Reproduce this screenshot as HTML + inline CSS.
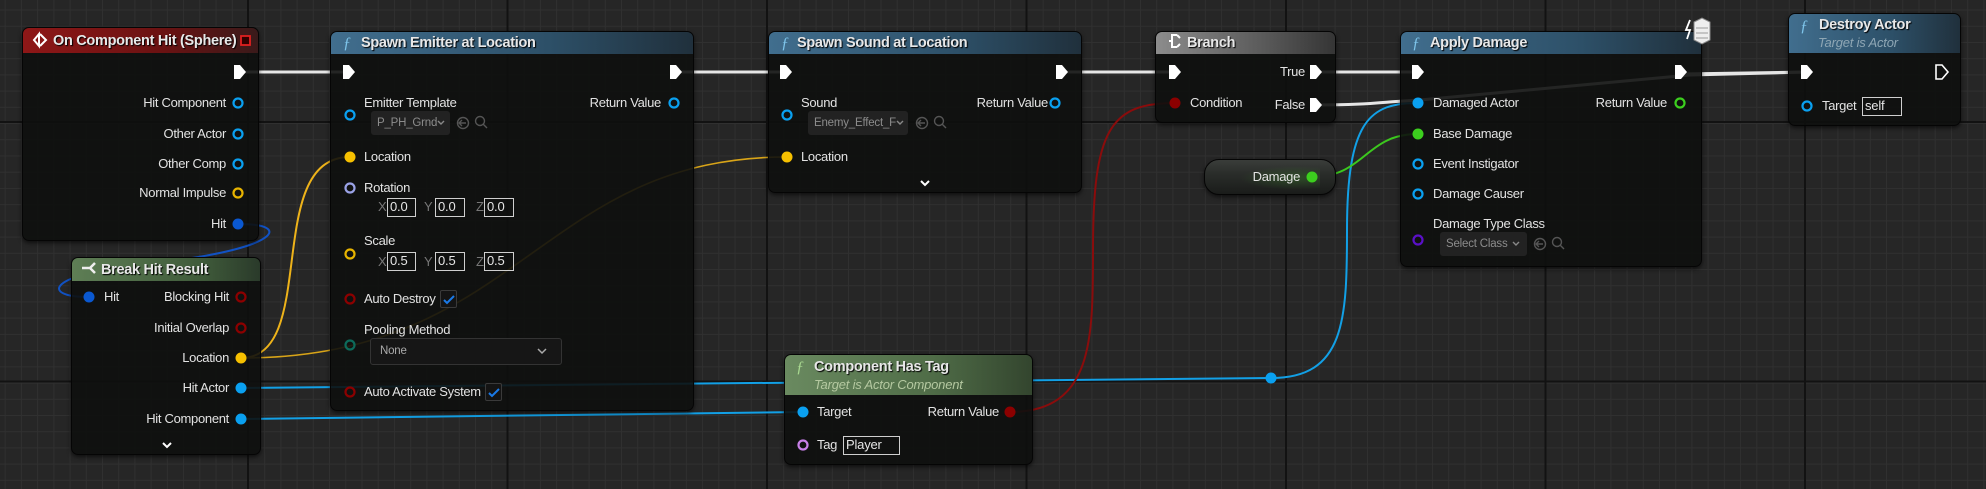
<!DOCTYPE html>
<html><head><meta charset="utf-8"><style>
*{margin:0;padding:0;box-sizing:border-box}
body{width:1986px;height:489px;overflow:hidden;background:#262626;font-family:"Liberation Sans",sans-serif;position:relative}
#grid{position:absolute;left:0;top:0;width:1986px;height:489px;
background-image:
linear-gradient(90deg,#121212 0,#121212 2px,transparent 2px),
linear-gradient(0deg,#121212 0,#121212 2px,transparent 2px),
linear-gradient(90deg,#303030 0,#303030 1px,transparent 1px),
linear-gradient(0deg,#303030 0,#303030 1px,transparent 1px);
background-size:259.5px 259.5px,259.5px 259.5px,16.22px 16.22px,16.22px 16.22px;
background-position:247px 0,0 123px,4.7px 0,0 10.5px;}
svg{position:absolute;left:0;top:0}
.n{position:absolute;background:rgba(14,15,14,0.9);border:1px solid #050505;border-radius:7px;box-shadow:0 2px 4px rgba(0,0,0,.6)}
.h{position:absolute;left:0;top:0;right:0;border-radius:6px 6px 0 0}
.ti{position:absolute;color:#e8e8e8;font-weight:bold;font-size:14.5px;letter-spacing:-0.3px;white-space:nowrap;text-shadow:1px 1px 1px #000;line-height:18px}
.st{position:absolute;font-style:italic;font-size:13px;white-space:nowrap;line-height:16px;letter-spacing:-0.2px}
.t{position:absolute;color:#e2e2e2;font-size:13px;letter-spacing:-0.3px;white-space:nowrap;line-height:18px}
.r{text-align:right}
.vb{position:absolute;border:1px solid #cfcfcf;color:#e6e6e6;font-size:13px;line-height:16px;padding-left:2px;letter-spacing:-0.2px}
.dd{position:absolute;background:#222;border-radius:3px;color:#8c8c8c;font-size:11.5px;line-height:24px;padding-left:6px;letter-spacing:-0.2px;white-space:nowrap;overflow:hidden}
.xyz{position:absolute;color:#777;font-size:13px;line-height:18px}
.cb{position:absolute;width:17px;height:18px;background:#141414;border:1px solid #3a3a3a;border-radius:2px}
</style></head><body>
<div id="grid"></div>

<!-- wires -->
<svg width="1986" height="489" fill="none">
<g stroke="#e6e6e6" stroke-width="3">
<path d="M240,72 L349,72"/><path d="M676,72 L786,72"/><path d="M1062,72 L1175,72"/><path d="M1316,72 L1418,72"/><path d="M1681,74 L1807,72"/>
<path d="M1316,105 C1370,105 1380,102 1420,100 L1690,75 L1807,72"/>
</g>
<path d="M238,224 C300,224 270,252 150,263 C45,274 40,297 89,297" stroke="#1152c4" stroke-width="2"/>
<path d="M241,358 C320,358 262,157 350,157" stroke="#eeb31a" stroke-width="2"/>
<path d="M241,358 C520,358 540,157 787,157" stroke="#d8a418" stroke-width="1.6"/>
<path d="M241,388 L1271,378" stroke="#12a0e6" stroke-width="2"/>
<path d="M1271,378 C1345,378 1347,320 1347,230 C1347,120 1370,103 1418,103" stroke="#12a0e6" stroke-width="2"/>
<path d="M241,419 L803,412" stroke="#12a0e6" stroke-width="2"/>
<path d="M1010,412 C1093,412 1093,340 1093,250 C1093,130 1110,103 1175,103" stroke="#8a0c0c" stroke-width="2"/>
<path d="M1312,177 C1365,177 1365,134 1418,134" stroke="#3cc81e" stroke-width="2"/>
</svg>

<!-- Node 1 -->
<div class="n" style="left:22px;top:27px;width:237px;height:214px">
<div class="h" style="height:25px;background:linear-gradient(90deg,#8e1717,#6a1212 60%,#3a1a1a)"></div>
<div class="ti" style="left:30px;top:4px">On Component Hit (Sphere)</div>
</div>
<!-- Break -->
<div class="n" style="left:71px;top:257px;width:190px;height:198px">
<div class="h" style="height:23px;background:linear-gradient(90deg,#5e7e55,#3f5a3a 70%,#2a3a2a)"></div>
<div class="ti" style="left:29px;top:3px">Break Hit Result</div>
</div>
<!-- Spawn Emitter -->
<div class="n" style="left:330px;top:31px;width:364px;height:380px">
<div class="h" style="height:22px;background:linear-gradient(90deg,#416e8e,#2d5068 60%,#20303c)"></div>
<div class="ti" style="left:30px;top:2px">Spawn Emitter at Location</div>
</div>
<!-- Spawn Sound -->
<div class="n" style="left:768px;top:31px;width:314px;height:162px">
<div class="h" style="height:22px;background:linear-gradient(90deg,#416e8e,#2d5068 60%,#20303c)"></div>
<div class="ti" style="left:28px;top:2px">Spawn Sound at Location</div>
</div>
<!-- Branch -->
<div class="n" style="left:1155px;top:31px;width:181px;height:92px">
<div class="h" style="height:22px;background:linear-gradient(90deg,#8c8c8c,#5a5a5a 60%,#353535)"></div>
<div class="ti" style="left:31px;top:2px">Branch</div>
</div>
<!-- Damage pill -->
<div class="n" style="left:1204px;top:159px;width:132px;height:36px;border-radius:15px;background:linear-gradient(180deg,#3a3d3a 0,#2a2d2a 40%,#1a1c1a 100%),#222"></div>
<div style="position:absolute;left:1240px;top:166px;width:80px;height:24px;background:radial-gradient(ellipse at 70% 50%,rgba(60,140,40,.35),transparent 70%)"></div>
<!-- Apply Damage -->
<div class="n" style="left:1400px;top:31px;width:302px;height:236px">
<div class="h" style="height:22px;background:linear-gradient(90deg,#416e8e,#2d5068 60%,#20303c)"></div>
<div class="ti" style="left:29px;top:2px">Apply Damage</div>
</div>
<!-- Destroy Actor -->
<div class="n" style="left:1788px;top:13px;width:173px;height:113px">
<div class="h" style="height:39px;background:linear-gradient(90deg,#416e8e,#2d5068 60%,#20303c)"></div>
<div class="ti" style="left:30px;top:2px">Destroy Actor</div>
<div class="st" style="left:29px;top:21px;color:#8ea6b4">Target is Actor</div>
</div>
<!-- Component Has Tag -->
<div class="n" style="left:784px;top:354px;width:249px;height:111px">
<div class="h" style="height:40px;background:linear-gradient(90deg,#6a8a60,#4f6c47 60%,#33452e)"></div>
<div class="ti" style="left:29px;top:3px">Component Has Tag</div>
<div class="st" style="left:29px;top:22px;color:#b4c8a0">Target is Actor Component</div>
</div>

<!-- labels -->
<div class="t r" style="right:1760px;top:94px">Hit Component</div>
<div class="t r" style="right:1760px;top:125px">Other Actor</div>
<div class="t r" style="right:1760px;top:155px">Other Comp</div>
<div class="t r" style="right:1760px;top:184px">Normal Impulse</div>
<div class="t r" style="right:1760px;top:215px">Hit</div>

<div class="t" style="left:104px;top:288px">Hit</div>
<div class="t r" style="right:1757px;top:288px">Blocking Hit</div>
<div class="t r" style="right:1757px;top:319px">Initial Overlap</div>
<div class="t r" style="right:1757px;top:349px">Location</div>
<div class="t r" style="right:1757px;top:379px">Hit Actor</div>
<div class="t r" style="right:1757px;top:410px">Hit Component</div>

<div class="t" style="left:364px;top:94px">Emitter Template</div>
<div class="dd" style="left:371px;top:111px;width:79px">P_PH_Grnd</div>
<div class="t r" style="right:1325px;top:94px">Return Value</div>
<div class="t" style="left:364px;top:148px">Location</div>
<div class="t" style="left:364px;top:179px">Rotation</div>
<div class="xyz" style="left:378px;top:198px">X</div><div class="vb" style="left:387px;top:198px;width:29px;height:19px">0.0</div>
<div class="xyz" style="left:424px;top:198px">Y</div><div class="vb" style="left:435px;top:198px;width:30px;height:19px">0.0</div>
<div class="xyz" style="left:476px;top:198px">Z</div><div class="vb" style="left:484px;top:198px;width:30px;height:19px">0.0</div>
<div class="t" style="left:364px;top:232px">Scale</div>
<div class="xyz" style="left:378px;top:253px">X</div><div class="vb" style="left:387px;top:252px;width:29px;height:19px">0.5</div>
<div class="xyz" style="left:424px;top:253px">Y</div><div class="vb" style="left:435px;top:252px;width:30px;height:19px">0.5</div>
<div class="xyz" style="left:476px;top:253px">Z</div><div class="vb" style="left:484px;top:252px;width:30px;height:19px">0.5</div>
<div class="t" style="left:364px;top:290px">Auto Destroy</div>
<div class="cb" style="left:440px;top:290px"></div>
<div class="t" style="left:364px;top:321px">Pooling Method</div>
<div class="dd" style="left:370px;top:338px;width:192px;height:27px;border:1px solid #333;background:#161616;color:#aaa;line-height:25px;padding-left:9px">None</div>
<div class="t" style="left:364px;top:383px">Auto Activate System</div>
<div class="cb" style="left:485px;top:383px"></div>

<div class="t" style="left:801px;top:94px">Sound</div>
<div class="dd" style="left:808px;top:111px;width:100px">Enemy_Effect_F</div>
<div class="t r" style="right:938px;top:94px">Return Value</div>
<div class="t" style="left:801px;top:148px">Location</div>

<div class="t" style="left:1190px;top:94px">Condition</div>
<div class="t r" style="right:681px;top:63px">True</div>
<div class="t r" style="right:681px;top:96px">False</div>
<div class="t r" style="right:686px;top:168px">Damage</div>

<div class="t" style="left:1433px;top:94px">Damaged Actor</div>
<div class="t" style="left:1433px;top:125px">Base Damage</div>
<div class="t" style="left:1433px;top:155px">Event Instigator</div>
<div class="t" style="left:1433px;top:185px">Damage Causer</div>
<div class="t" style="left:1433px;top:215px">Damage Type Class</div>
<div class="dd" style="left:1440px;top:232px;width:87px">Select Class</div>
<div class="t r" style="right:319px;top:94px">Return Value</div>

<div class="t" style="left:1822px;top:97px">Target</div>
<div class="vb" style="left:1862px;top:97px;width:40px;height:19px">self</div>

<div class="t" style="left:817px;top:403px">Target</div>
<div class="t r" style="right:987px;top:403px">Return Value</div>
<div class="t" style="left:817px;top:436px">Tag</div>
<div class="vb" style="left:843px;top:436px;width:57px;height:19px">Player</div>

<!-- pins & icons -->
<svg width="1986" height="489">
<defs>
<g id="ex"><path d="M-6,-7 H0 L6,0 L0,7 H-6 Z" fill="#fff"/></g>
</defs>
<!-- exec pins -->
<use href="#ex" x="240" y="72"/><use href="#ex" x="349" y="72"/><use href="#ex" x="676" y="72"/>
<use href="#ex" x="786" y="72"/><use href="#ex" x="1062" y="72"/><use href="#ex" x="1175" y="72"/>
<use href="#ex" x="1316" y="72"/><use href="#ex" x="1316" y="105"/><use href="#ex" x="1418" y="72"/>
<use href="#ex" x="1681" y="72"/><use href="#ex" x="1807" y="72"/>
<path d="M1936,65 H1942 L1948,72 L1942,79 H1936 Z" fill="none" stroke="#fff" stroke-width="1.6"/>

<!-- ring pins -->
<g fill="none" stroke-width="2.2">
<circle cx="238" cy="103" r="4.5" stroke="#0aa0f0"/><circle cx="238" cy="134" r="4.5" stroke="#0aa0f0"/>
<circle cx="238" cy="164" r="4.5" stroke="#0aa0f0"/><circle cx="238" cy="193" r="4.5" stroke="#e8b400"/>
<circle cx="241" cy="297" r="4.5" stroke="#8c0000"/><circle cx="241" cy="328" r="4.5" stroke="#8c0000"/>
<circle cx="350" cy="115" r="4.5" stroke="#0aa0f0"/><circle cx="674" cy="103" r="4.5" stroke="#0aa0f0"/>
<circle cx="350" cy="188" r="4.5" stroke="#9aa2e6"/><circle cx="350" cy="254" r="4.5" stroke="#e8b400"/>
<circle cx="350" cy="299" r="4.5" stroke="#8c0000"/><circle cx="350" cy="345" r="4.5" stroke="#0d6a5a"/>
<circle cx="350" cy="392" r="4.5" stroke="#8c0000"/>
<circle cx="787" cy="115" r="4.5" stroke="#0aa0f0"/><circle cx="1055" cy="103" r="4.5" stroke="#0aa0f0"/>
<circle cx="1418" cy="164" r="4.5" stroke="#0aa0f0"/><circle cx="1418" cy="194" r="4.5" stroke="#0aa0f0"/>
<circle cx="1418" cy="240" r="4.5" stroke="#5a10c8"/><circle cx="1680" cy="103" r="4.5" stroke="#3ccf1e"/>
<circle cx="1807" cy="106" r="4.5" stroke="#0aa0f0"/><circle cx="803" cy="445" r="4.5" stroke="#c880e8"/>
</g>
<!-- filled pins -->
<circle cx="238" cy="224" r="5.5" fill="#0a58d0"/><circle cx="89" cy="297" r="5.5" fill="#0a58d0"/>
<circle cx="241" cy="358" r="5.5" fill="#f6c000"/><circle cx="241" cy="388" r="5.5" fill="#0aa0f0"/>
<circle cx="241" cy="419" r="5.5" fill="#0aa0f0"/><circle cx="350" cy="157" r="5.5" fill="#f6c000"/>
<circle cx="787" cy="157" r="5.5" fill="#f6c000"/><circle cx="1175" cy="103" r="5.5" fill="#8c0000"/>
<circle cx="1312" cy="177" r="5.5" fill="#3ccf1e"/><circle cx="1418" cy="103" r="5.5" fill="#0aa0f0"/>
<circle cx="1418" cy="134" r="5.5" fill="#3ccf1e"/><circle cx="803" cy="412" r="5.5" fill="#0aa0f0"/>
<circle cx="1010" cy="412" r="5.5" fill="#8c0000"/><circle cx="1271" cy="378" r="5.5" fill="#0aa0f0"/>
<!-- header icons -->
<path d="M34,40 L39,34 L39,46 Z M40,34 L46,40 L40,46" fill="none" stroke="#fff" stroke-width="2"/>
<rect x="241" y="36" width="9" height="9" fill="#300" stroke="#e02020" stroke-width="1.8"/>
<g fill="#7ec4ea" font-family="Liberation Serif,serif" font-style="italic" font-size="16">
<text x="343" y="48">ƒ</text><text x="781" y="48">ƒ</text><text x="1412" y="48">ƒ</text><text x="1800" y="31">ƒ</text>
</g>
<text x="796" y="372" fill="#a8d890" font-family="Liberation Serif,serif" font-style="italic" font-size="16">ƒ</text>
<path d="M1177,35 h-5 v12 h5 M1172,41 h-3 M1177,35 l3,3 M1177,47 l3,-3" fill="none" stroke="#fff" stroke-width="2"/>
<path d="M82,268 h8 M90,268 l5,-5 M90,268 l5,5" fill="none" stroke="#eee" stroke-width="2.5"/>
<!-- chevrons -->
<path d="M163,443 l4,4 l4,-4" fill="none" stroke="#fff" stroke-width="2"/>
<path d="M921,181 l4,4 l4,-4" fill="none" stroke="#fff" stroke-width="2"/>
<path d="M538,349 l4,4 l4,-4" fill="none" stroke="#aaa" stroke-width="1.5"/>
<path d="M438,121 l3,3 l3,-3" fill="none" stroke="#888" stroke-width="1.4"/>
<path d="M897,121 l3,3 l3,-3" fill="none" stroke="#888" stroke-width="1.4"/>
<path d="M1513,242 l3,3 l3,-3" fill="none" stroke="#888" stroke-width="1.4"/>
<!-- browse/search icons -->
<g fill="none" stroke="#555" stroke-width="1.4">
<circle cx="463" cy="123" r="5.5"/><path d="M466,123 h-6 M462,120 l-3,3 l3,3"/><circle cx="480" cy="121" r="4.5"/><path d="M483,124 l4,4"/>
<circle cx="922" cy="123" r="5.5"/><path d="M925,123 h-6 M921,120 l-3,3 l3,3"/><circle cx="939" cy="121" r="4.5"/><path d="M942,124 l4,4"/>
<circle cx="1540" cy="244" r="5.5"/><path d="M1543,244 h-6 M1539,241 l-3,3 l3,3"/><circle cx="1557" cy="242" r="4.5"/><path d="M1560,245 l4,4"/>
</g>
<!-- checkmarks -->
<path d="M444,300 l3,3 l7,-7" fill="none" stroke="#1a7ae8" stroke-width="2"/>
<path d="M489,393 l3,3 l7,-7" fill="none" stroke="#1a7ae8" stroke-width="2"/>
<!-- apply damage corner icon -->
<path d="M1694,22 l8,-4 l8,4 v18 l-8,4 l-8,-4 Z" fill="#eee" stroke="#888" stroke-width="1"/>
<path d="M1696,28 h12 M1696,33 h12 M1696,38 h12" stroke="#999" stroke-width="1"/>
<path d="M1690,20 l-4,10 h4 l-3,9" fill="none" stroke="#fff" stroke-width="1.8"/>
</svg>
</body></html>
